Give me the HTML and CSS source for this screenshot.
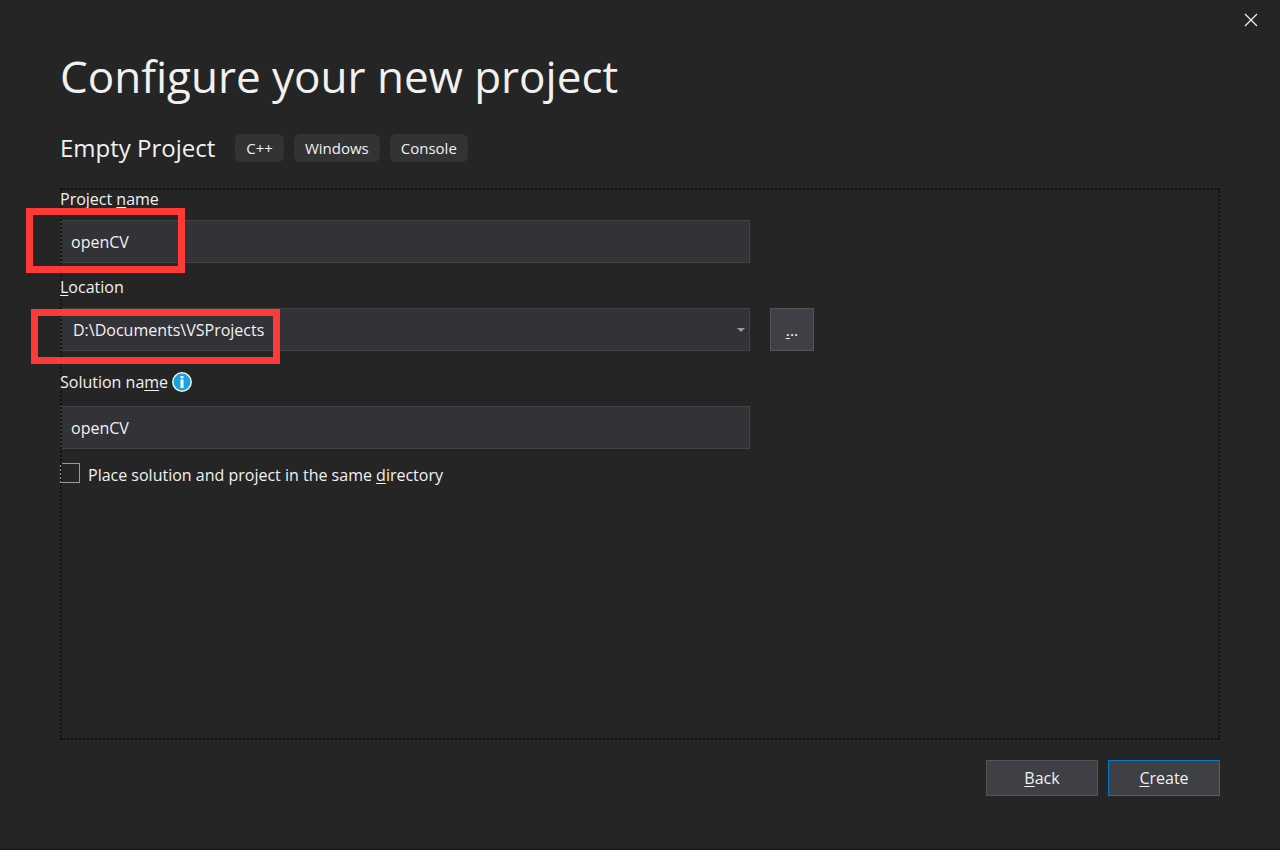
FILE: index.html
```html
<!DOCTYPE html>
<html lang="en">
<head>
    <meta charset="UTF-8">
    <meta name="viewport" content="width=device-width, initial-scale=1.0">
    <title>Configure your new project</title>
    <link rel="stylesheet" href="styles.css">
</head>
<body>
    <div class="dialog">
        <button class="close-btn" type="button" aria-label="Close">
            <svg width="14" height="14" viewBox="0 0 14 14">
                <path d="M1 1L13 13M13 1L1 13" stroke="#f1f1f1" stroke-width="1.2" fill="none"/>
            </svg>
        </button>

        <h1>Configure your new project</h1>

        <div class="template">
            <h2>Empty Project</h2>
            <span class="tag">C++</span>
            <span class="tag">Windows</span>
            <span class="tag">Console</span>
        </div>

        <form class="config">
            <div class="fields">
                <div class="field">
                    <label for="project-name">Project <u>n</u>ame</label>
                    <div class="control">
                        <input class="text-box" type="text" id="project-name" value="openCV">
                        <div class="mark mark-name"></div>
                    </div>
                </div>

                <div class="field field-location">
                    <label for="location"><u>L</u>ocation</label>
                    <div class="control">
                        <div class="select-wrap">
                            <select class="text-box location" id="location">
                                <option>D:\Documents\VSProjects</option>
                            </select>
                            <svg class="arrow" width="8" height="4" viewBox="0 0 8 4">
                                <path d="M0 0H8L4 4Z" fill="#999999"/>
                            </svg>
                        </div>
                        <button class="btn browse" type="button"><u>.</u>..</button>
                        <div class="mark mark-location"></div>
                    </div>
                </div>

                <div class="field field-solution">
                    <div class="label-row">
                        <label for="solution-name">Solution na<u>m</u>e</label>
                        <svg width="20" height="20" viewBox="0 0 20 20">
                            <circle cx="10" cy="10" r="9.2" fill="#1ba1e2" stroke="#f1f1f1" stroke-width="1.5"/>
                            <path d="M8.5 4H11.5V6.2H8.5ZM8.5 7.5H11.5V16H8.5Z" fill="#ffffff"/>
                        </svg>
                    </div>
                    <div class="control">
                        <input class="text-box" type="text" id="solution-name" value="openCV">
                    </div>
                </div>

                <div class="check-row">
                    <input type="checkbox" id="same-dir">
                    <label for="same-dir">Place solution and project in the same <u>d</u>irectory</label>
                </div>
            </div>

            <div class="actions">
                <button class="btn" type="button"><u>B</u>ack</button>
                <button class="btn primary" type="submit"><u>C</u>reate</button>
            </div>
        </form>
    </div>
</body>
</html>
```
FILE: styles.css
```css
* {
    box-sizing: border-box;
}
body {
    margin: 0;
    background: #252526;
    color: #f1f1f1;
    font-family: "Open Sans", "Noto Sans", sans-serif;
    font-size: 16px;
    line-height: 24px;
}
.dialog {
    position: relative;
    display: flex;
    flex-direction: column;
    min-height: 100vh;
    padding: 44px 60px 52px;
    border-bottom: 2px solid #1e1e1e;
}
.close-btn {
    position: absolute;
    top: 6px;
    right: 15px;
    display: flex;
    align-items: center;
    justify-content: center;
    width: 28px;
    height: 28px;
    padding: 0;
    border: none;
    background: none;
    cursor: pointer;
}
h1 {
    margin: 0;
    font-size: 44px;
    font-weight: 400;
    line-height: 64px;
}
.template {
    display: flex;
    align-items: center;
    gap: 10px;
    margin: 24px 0;
}
h2 {
    margin: 0 10px 0 0;
    font-size: 24px;
    font-weight: 400;
    line-height: 32px;
}
.tag {
    padding: 2px 11px;
    border-radius: 6px;
    background: #333334;
    font-size: 15px;
}
.config {
    display: flex;
    flex: 1;
    flex-direction: column;
    gap: 20px;
}
.fields {
    position: relative;
    flex: 1;
}
/* dotted focus frame, drawn over the boxes */
.fields::after {
    content: "";
    position: absolute;
    inset: 0;
    border: 2px dotted #111111;
    pointer-events: none;
}
.field {
    margin-bottom: 13px;
}
.field-location {
    margin-bottom: 20px;
}
.field-solution {
    margin-bottom: 14px;
}
label {
    display: block;
    position: relative;
    z-index: 1;
    line-height: 22px;
}
u {
    text-underline-offset: 2px;
}
.control {
    position: relative;
    display: flex;
    gap: 20px;
    margin-top: 10px;
}
.field-solution .control {
    margin-top: 13px;
}
.text-box {
    width: 100%;
    max-width: 690px;
    height: 43px;
    padding: 0 10px;
    border: 1px solid #434346;
    border-radius: 0;
    background: #333337;
    color: #f1f1f1;
    font: inherit;
    outline: none;
}
.select-wrap {
    position: relative;
    flex: 0 1 690px;
}
.location {
    display: block;
    appearance: none;
    padding-left: 12px;
}
.arrow {
    position: absolute;
    top: 20px;
    right: 5px;
    pointer-events: none;
}
.btn {
    width: 112px;
    height: 36px;
    padding: 0;
    border: 1px solid #555555;
    background: #3f3f46;
    color: #f1f1f1;
    font: inherit;
    cursor: pointer;
}
.btn:hover {
    background: #4a4a52;
}
.primary {
    border-color: #007acc;
}
.browse {
    width: 44px;
    height: 43px;
}
.label-row {
    display: flex;
    align-items: center;
    gap: 4px;
}
.check-row {
    display: flex;
    gap: 8px;
}
.check-row label {
    line-height: 24px;
}
.check-row input {
    appearance: none;
    width: 20px;
    height: 20px;
    margin: 0;
    border: 1px solid #999999;
}
.check-row input:checked {
    background: #007acc;
}
.mark {
    position: absolute;
    z-index: 2;
    border: 7px solid #ff3838;
    pointer-events: none;
}
.mark-name {
    top: -12px;
    left: -34px;
    width: 159px;
    height: 65px;
}
.mark-location {
    top: 1px;
    left: -29px;
    width: 249px;
    height: 55px;
}
.actions {
    display: flex;
    justify-content: flex-end;
    gap: 10px;
}
```
